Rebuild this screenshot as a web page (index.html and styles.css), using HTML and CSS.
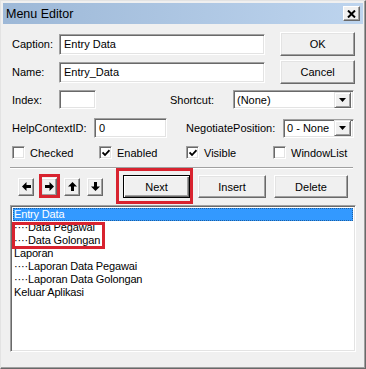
FILE: index.html
```html
<!DOCTYPE html>
<html lang="en">
<head>
    <meta charset="UTF-8">
    <meta name="viewport" content="width=device-width, initial-scale=1.0">
    <title>Menu Editor</title>
    <link rel="stylesheet" href="styles.css">
</head>
<body>
    <div class="window">
        <div class="titlebar">
            <span class="title">Menu Editor</span>
            <span class="close">
                <svg width="9" height="8" viewBox="0 0 9 8"><path d="M1 0.5 L8 7.5 M8 0.5 L1 7.5" stroke="#000" stroke-width="2"/></svg>
            </span>
        </div>

        <div class="content">
            <div class="row row-tall">
                <span class="lbl lbl-first">Caption:</span>
                <div class="field text-wide">Entry Data</div>
                <button class="btn btn-side">OK</button>
            </div>

            <div class="row row-tall row-second">
                <span class="lbl lbl-first">Name:</span>
                <div class="field text-wide">Entry_Data</div>
                <button class="btn btn-side">Cancel</button>
            </div>

            <div class="row row-index">
                <span class="lbl lbl-first">Index:</span>
                <div class="field text-index"></div>
                <span class="lbl lbl-shortcut">Shortcut:</span>
                <div class="field combo combo-shortcut">
                    <span class="combo-text">(None)</span>
                    <span class="combo-arrow"><svg width="7" height="4" viewBox="0 0 7 4"><path d="M0 0 H7 L3.5 4 Z" fill="#000"/></svg></span>
                </div>
            </div>

            <div class="row row-help">
                <span class="lbl lbl-help">HelpContextID:</span>
                <div class="field text-help">0</div>
                <span class="lbl lbl-negotiate">NegotiatePosition:</span>
                <div class="field combo combo-negotiate">
                    <span class="combo-text">0 - None</span>
                    <span class="combo-arrow"><svg width="7" height="4" viewBox="0 0 7 4"><path d="M0 0 H7 L3.5 4 Z" fill="#000"/></svg></span>
                </div>
            </div>

            <div class="checks">
                <div class="check"><span class="box"></span>Checked</div>
                <div class="check"><span class="box"><svg width="8" height="8" viewBox="0 0 8 8"><path d="M0.5 3.5 L3 6 L7.5 1.2" stroke="#000" stroke-width="1.8" fill="none"/></svg></span>Enabled</div>
                <div class="check"><span class="box"><svg width="8" height="8" viewBox="0 0 8 8"><path d="M0.5 3.5 L3 6 L7.5 1.2" stroke="#000" stroke-width="1.8" fill="none"/></svg></span>Visible</div>
                <div class="check"><span class="box"></span>WindowList</div>
            </div>

            <div class="separator"></div>

            <div class="row row-actions">
                <div class="arrows">
                    <button class="btn btn-arrow"><svg width="9" height="9" viewBox="0 0 9 9"><path d="M0 4.5 L4.5 0 V3 H9 V6 H4.5 V9 Z" fill="#000"/></svg></button>
                    <button class="btn btn-arrow mark mark-arrow"><svg width="9" height="9" viewBox="0 0 9 9"><path d="M9 4.5 L4.5 0 V3 H0 V6 H4.5 V9 Z" fill="#000"/></svg></button>
                    <button class="btn btn-arrow"><svg width="9" height="9" viewBox="0 0 9 9"><path d="M4.5 0 L9 4.5 H6 V9 H3 V4.5 H0 Z" fill="#000"/></svg></button>
                    <button class="btn btn-arrow"><svg width="9" height="9" viewBox="0 0 9 9"><path d="M4.5 9 L9 4.5 H6 V0 H3 V4.5 H0 Z" fill="#000"/></svg></button>
                </div>
                <button class="btn btn-default btn-next mark mark-next">Next</button>
                <button class="btn btn-insert">Insert</button>
                <button class="btn btn-delete">Delete</button>
            </div>

            <div class="field listbox">
                <div class="item selected">Entry Data</div>
                <div class="group mark-group">
                    <div class="item">····Data Pegawai</div>
                    <div class="item">····Data Golongan</div>
                </div>
                <div class="item">Laporan</div>
                <div class="item">····Laporan Data Pegawai</div>
                <div class="item">····Laporan Data Golongan</div>
                <div class="item">Keluar Aplikasi</div>
            </div>
        </div>
    </div>
</body>
</html>
```

FILE: styles.css
```css
body {
    margin: 0;
    background-color: #f0f0f0;
    font-family: "Liberation Sans", Arial, sans-serif;
    font-size: 11px;
    color: #000;
}

.window {
    width: 366px;
    height: 369px;
    box-sizing: border-box;
    background-color: #f0f0f0;
    border: 1px solid;
    border-color: #e3e3e3 #696969 #696969 #e3e3e3;
    box-shadow: inset -1px -1px #a0a0a0;
    padding: 2px 2px 0 2px;
}

.titlebar {
    height: 21px;
    display: flex;
    align-items: center;
    justify-content: space-between;
    padding: 0 3px 0 3px;
    background: linear-gradient(to right, #9db8d7, #bdd4ee);
}

.title {
    font-size: 12.5px;
}

.close {
    width: 15px;
    height: 13px;
    display: flex;
    align-items: center;
    justify-content: center;
    background-color: #f0f0f0;
    border: 1px solid;
    border-color: #fff #696969 #696969 #fff;
    box-shadow: inset -1px -1px #a0a0a0;
}

.content {
    padding: 8px 8px 0 7px;
}

.row {
    display: flex;
    align-items: center;
}

.row-tall {
    height: 24px;
}

.row-second {
    margin-top: 4px;
}

.row-index {
    height: 19px;
    margin-top: 6px;
}

.row-help {
    height: 20px;
    margin-top: 9px;
}

.lbl {
    flex-shrink: 0;
}

.lbl-first {
    width: 47px;
    padding-left: 2px;
}

.lbl-shortcut {
    width: 63px;
    margin-left: 74px;
}

.lbl-help {
    width: 82px;
    padding-left: 2px;
}

.lbl-negotiate {
    width: 97px;
    margin-left: 19px;
}

.field {
    box-sizing: border-box;
    background-color: #fff;
    border: 1px solid;
    border-color: #a0a0a0 #fff #fff #a0a0a0;
    box-shadow: inset 1px 1px #696969, inset -1px -1px #e3e3e3;
    padding: 0 4px;
    display: flex;
    align-items: center;
}

.text-wide {
    width: 207px;
    height: 21px;
}

.text-index {
    width: 37px;
    height: 19px;
}

.text-help {
    width: 73px;
    height: 20px;
}

.combo {
    height: 19px;
    padding: 0 2px 0 3px;
    justify-content: space-between;
}

.combo-shortcut {
    width: 121px;
}

.combo-negotiate {
    width: 71px;
}

.combo-arrow {
    width: 15px;
    height: 14px;
    display: flex;
    align-items: center;
    justify-content: center;
    background-color: #f0f0f0;
    border: 1px solid;
    border-color: #e3e3e3 #696969 #696969 #e3e3e3;
    box-shadow: inset 1px 1px #fff, inset -1px -1px #a0a0a0;
}

.btn {
    position: relative;
    box-sizing: border-box;
    font-family: inherit;
    font-size: 11px;
    color: #000;
    background-color: #f0f0f0;
    border: 1px solid;
    border-color: #fff #696969 #696969 #fff;
    box-shadow: inset -1px -1px #a0a0a0, inset 1px 1px #e3e3e3;
    padding: 0;
    display: flex;
    align-items: center;
    justify-content: center;
}

.btn-side {
    width: 75px;
    height: 24px;
    margin-left: 15px;
}

.checks {
    display: grid;
    grid-template-columns: 87px 87px 87px 87px;
    padding-left: 2px;
    margin-top: 8px;
    height: 13px;
}

.check {
    display: flex;
    align-items: center;
    gap: 5px;
}

.box {
    width: 13px;
    height: 13px;
    box-sizing: border-box;
    background-color: #fff;
    border: 1px solid;
    border-color: #a0a0a0 #fff #fff #a0a0a0;
    box-shadow: inset 1px 1px #696969, inset -1px -1px #e3e3e3;
    display: flex;
    align-items: center;
    justify-content: center;
}

.separator {
    margin-top: 8px;
    height: 1px;
    background-color: #a0a0a0;
    border-bottom: 1px solid #fff;
    margin-right: 2px;
}

.row-actions {
    height: 23px;
    margin-top: 6px;
}

.arrows {
    display: flex;
    gap: 7px;
    margin-left: 8px;
}

.btn-arrow {
    width: 16px;
    height: 18px;
}

.btn-default {
    border-color: #000;
    box-shadow: inset 1px 1px #fff, inset -1px -1px #696969, inset -2px -2px #a0a0a0;
}

.btn-next {
    width: 67px;
    height: 23px;
    margin-left: 20px;
}

.btn-insert {
    width: 68px;
    height: 23px;
    margin-left: 8px;
}

.btn-delete {
    width: 74px;
    height: 23px;
    margin-left: 8px;
}

.listbox {
    margin-top: 7px;
    width: 346px;
    height: 147px;
    padding: 2px 2px;
    display: block;
}

.item {
    height: 13px;
    line-height: 13px;
    padding-left: 1px;
    letter-spacing: -0.15px;
    white-space: nowrap;
}

.selected {
    background-color: #3399ff;
    color: #fff;
    outline: 1px dotted #1f5f9f;
    outline-offset: -1px;
}

.group {
    position: relative;
}

/* red annotation frames */
.mark-arrow::after,
.mark-next::after,
.mark-group::after {
    content: "";
    position: absolute;
    box-sizing: border-box;
    border: 3px solid #d8232f;
    pointer-events: none;
}

.mark-arrow::after {
    top: -5px;
    right: -4px;
    bottom: -3px;
    left: -3px;
}

.mark-next::after {
    top: -8px;
    right: -4px;
    bottom: -7px;
    left: -8px;
}

.mark-group::after {
    top: 1px;
    left: -1px;
    width: 93px;
    height: 27px;
}
```
